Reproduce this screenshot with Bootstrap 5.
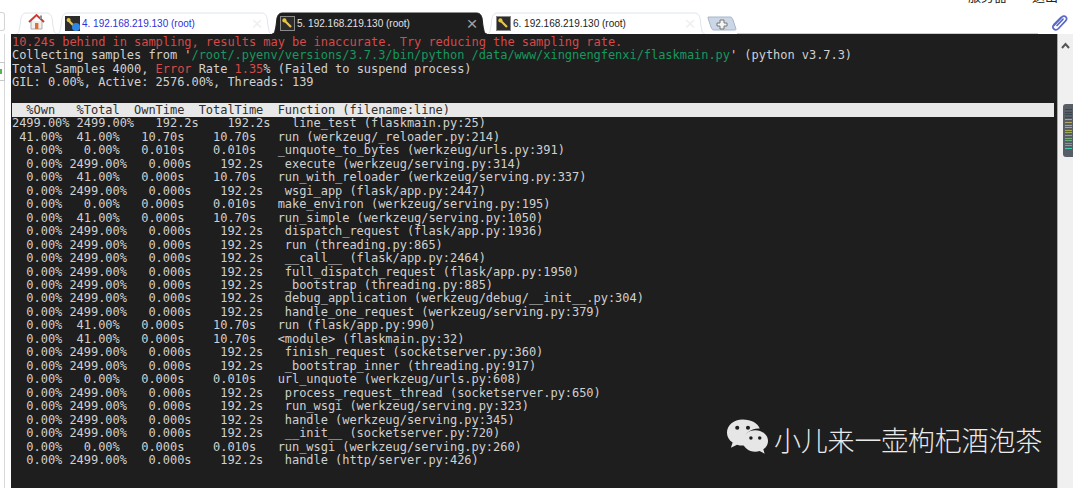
<!DOCTYPE html>
<html lang="zh">
<head>
<meta charset="utf-8">
<title>py-spy terminal</title>
<link href="https://cdn.jsdelivr.net/npm/bootstrap@5.3.0/dist/css/bootstrap.min.css" rel="stylesheet">
<style>
html,body{width:1080px;height:488px;overflow:hidden;background:#fff;margin:0}
.shell{width:1080px;height:488px}
.topstrip{height:34px;flex:none;overflow:hidden}
.addr-end{width:5px;height:19px;margin-top:12px;border:1px solid #d4d4d4;border-left:0;border-radius:0 3px 3px 0;flex:none}
.tabs{margin-left:11px;margin-top:12px;height:22px}
.tab-item{position:relative;height:22px;flex:none;font:10px/22px "Liberation Sans",sans-serif;padding-top:1px}
.tab-shape{position:absolute;inset:0;width:100%;height:100%}
.tab-body{position:relative;height:21px}
.t-home{width:41px}
.t-a{width:215px}
.t-b{width:218px}
.txt-blue{color:#3030d8}
.txt-light{color:#e2e2e2}
.txt-dark{color:#1c1c1c}
.tab-x{margin-left:auto;font-size:19px;line-height:19px;width:30px;text-align:center;font-weight:300}
.x-faint{color:#efefef}
.x-grey{color:#a0a0a0}
.tab-ico{width:15px;height:15px;margin-left:8px;margin-right:2px;flex:none;display:block}
.t-b .tab-ico{margin-left:9px}
.plus-tab{width:30px;height:15px;margin:4px 0 0 2px;flex:none;display:block}
.tail{width:343px;flex:none;margin-top:-3px;background:linear-gradient(#c5d0dc,#c5d0dc) 0 100%/301px 1px no-repeat;height:37px}
.cut-text{font:13px/14px "Noto Sans CJK SC",sans-serif;color:#222;margin-top:0;height:14px;transform:translateY(-8px);padding-left:231px;word-spacing:22px;white-space:pre}
.clip-ico{display:block;margin:3px 12px 0 auto}
.midrow{flex:1;min-height:0}
.gutter{width:11px;flex:none}
.gut-line{width:5px;border-right:1px solid #d8d8d8;padding-top:28px}
.gut-box{height:19px;width:5px;border:1px solid #c8c8c8;border-left:0;position:relative}
.gut-box i{display:block;width:2px;height:5px;background:#53b653;margin-top:6px}
.term{width:1046px;flex:none;background:#1e1e1e;position:relative;overflow:hidden}
.term-text{margin:0;padding:2px 0 0 1px;font:12px/13.47px "DejaVu Sans Mono","Liberation Mono",monospace;letter-spacing:-.045px;color:#d0d0d0;white-space:pre;overflow:hidden}
.head-line{display:block;background:#e8e8e8;color:#2e2e2e;margin-right:3px;height:14px;line-height:15px}
.c-red{color:#d44a48}
.c-green{color:#14995f}
.marker{position:absolute;left:715px;top:384px;color:#e9e9e9}
.mark-txt{font:27px/36px "Noto Sans CJK SC",sans-serif;font-weight:300;white-space:nowrap;color:#eaeaea;letter-spacing:-.2px;padding-top:4px}
.scroller{width:16px;flex:none;background:#f0f0f0;border-left:1px solid #a9a9a9;position:relative}
.thumb{position:absolute;left:5px;top:70px;width:10px;height:53px;background:#575e66;border-radius:3px 0 0 3px;padding:5px 1px 0 2px}
.thumb i{display:block;height:40px;background:repeating-linear-gradient(#0000 0 1px,#575e66 1px 2.6px),linear-gradient(#3d4650 0 22%,#b7a75a 24% 45%,#9fae55 60%,#55ab8d 85%,#45d0b0)}
.arrow-up{display:block;margin:8px auto 0}
.rightpad{flex:1;background:#fff}
.we-ico{width:43px;height:40px;flex:none;margin-right:-3px}
</style>
</head>
<body>
<div class="shell d-flex flex-column">
  <div class="topstrip d-flex">
    <div class="addr-end"></div>
    <div class="tabs d-flex">
      <div class="tab-item t-home">
        <svg class="tab-shape" viewBox="0 0 41 22" preserveAspectRatio="none"><path d="M0 22C3 22 3 18 4 14L5 6C6 2 8 1 11 1H30C33 1 35 2 36 6L37 14C38 18 38 22 41 22" fill="#fff" stroke="#dfe5ec"/></svg>
        <div class="tab-body d-flex justify-content-center">
          <svg width="17" height="17" viewBox="0 0 17 17"><path d="M3 8v8h11V8" fill="#f4f1ec" stroke="#a8b0b8"/><rect x="7" y="10" width="3.4" height="6" fill="#e0703a"/><path d="M1 9L8.5 2L16 9" fill="none" stroke="#d0392f" stroke-width="2"/><rect x="12" y="2.5" width="2" height="3.5" fill="#8f8f8f"/></svg>
        </div>
      </div>
      <div class="tab-item t-a">
        <svg class="tab-shape" viewBox="0 0 215 22" preserveAspectRatio="none"><path d="M0 22C3 22 3 18 4 14L5 6C6 2 8 1 11 1H204C207 1 209 2 210 6L211 14C212 18 212 22 215 22" fill="#fff" stroke="#dfe5ec"/></svg>
        <div class="tab-body d-flex align-items-center">
          <svg class="tab-ico" viewBox="0 0 15 15"><rect width="15" height="15" fill="#2c2c2c"/><path d="M3 4L9 10" stroke="#e8c53a" stroke-width="2.2"/><circle cx="3.6" cy="4" r="2" fill="#e8c53a"/><circle cx="11" cy="11" r="4" fill="#2f86e6"/></svg>
          <span class="txt-blue">4. 192.168.219.130 (root)</span>
          <span class="tab-x x-faint">×</span>
        </div>
      </div>
      <div class="tab-item t-a">
        <svg class="tab-shape" viewBox="0 0 215 22" preserveAspectRatio="none"><path d="M0 22C3 22 3 18 4 14L5 6C6 2 8 1 11 1H204C207 1 209 2 210 6L211 14C212 18 212 22 215 22" fill="#1e1e1e" stroke="#1e1e1e"/></svg>
        <div class="tab-body d-flex align-items-center">
          <svg class="tab-ico" viewBox="0 0 15 15"><rect x=".5" y=".5" width="14" height="14" fill="#2c2c2c" stroke="#8a8a8a"/><path d="M4 4L11 11" stroke="#e8c53a" stroke-width="2.2"/><circle cx="4.4" cy="4.4" r="2.1" fill="#e8c53a"/></svg>
          <span class="txt-light">5. 192.168.219.130 (root)</span>
          <span class="tab-x x-grey">×</span>
        </div>
      </div>
      <div class="tab-item t-b">
        <svg class="tab-shape" viewBox="0 0 218 22" preserveAspectRatio="none"><path d="M0 22C3 22 3 18 4 14L5 6C6 2 8 1 11 1H207C210 1 212 2 213 6L214 14C215 18 215 22 218 22" fill="#fff" stroke="#dfe5ec"/></svg>
        <div class="tab-body d-flex align-items-center">
          <svg class="tab-ico" viewBox="0 0 15 15"><rect x=".5" y=".5" width="14" height="14" fill="#2c2c2c" stroke="#8a8a8a"/><path d="M4 4L11 11" stroke="#e8c53a" stroke-width="2.2"/><circle cx="4.4" cy="4.4" r="2.1" fill="#e8c53a"/></svg>
          <span class="txt-dark">6. 192.168.219.130 (root)</span>
          <span class="tab-x x-faint">×</span>
        </div>
      </div>
      <svg class="plus-tab" viewBox="0 0 30 15"><path d="M1 1H23C25 1 25 2 26 4L29 13C29 14 28 14 27 14H7C5 14 5 13 4 11L1 2Z" fill="#cbd7e6" stroke="#a9b6c6"/><path d="M13 4h4v3h3v3h-3v3h-4v-3h-3V7h3z" fill="#f4f4f4" stroke="#777"/></svg>
    </div>
    <div class="tail ms-auto">
      <div class="cut-text">服务器 退出</div>
      <svg class="clip-ico" width="17" height="17" viewBox="0 0 17 17"><path d="M3 11.5L10.8 3.2c1.2-1.3 3-1.3 4-.3s1 2.600-.2 3.900L7.500 14.500c-1.500 1.500-3.400 1.600-4.600.500s-1.200-3.100.200-4.700L9.800 3.500M6 11.500l6-6.400" fill="none" stroke="#5a68c8" stroke-width="1.700" stroke-linecap="round"/></svg>
    </div>
  </div>
  <div class="midrow d-flex">
    <div class="gutter"><div class="gut-line h-100"><div class="gut-box"><i></i></div></div></div>
    <div class="term">
<pre class="term-text"><span class="c-red">10.24s behind in sampling, results may be inaccurate. Try reducing the sampling rate.</span>
Collecting samples from '<span class="c-green">/root/.pyenv/versions/3.7.3/bin/python /data/www/xingnengfenxi/flaskmain.py</span>' (python v3.7.3)
Total Samples 4000, <span class="c-red">Error</span> Rate <span class="c-red">1.35</span>% (Failed to suspend process)
GIL: 0.00%, Active: 2576.00%, Threads: 139

<span class="head-line">  %Own   %Total  OwnTime  TotalTime  Function (filename:line)</span>2499.00% 2499.00%   192.2s    192.2s   line_test (flaskmain.py:25)
 41.00%  41.00%   10.70s    10.70s   run (werkzeug/_reloader.py:214)
  0.00%   0.00%   0.010s    0.010s   _unquote_to_bytes (werkzeug/urls.py:391)
  0.00% 2499.00%   0.000s    192.2s   execute (werkzeug/serving.py:314)
  0.00%  41.00%   0.000s    10.70s   run_with_reloader (werkzeug/serving.py:337)
  0.00% 2499.00%   0.000s    192.2s   wsgi_app (flask/app.py:2447)
  0.00%   0.00%   0.000s    0.010s   make_environ (werkzeug/serving.py:195)
  0.00%  41.00%   0.000s    10.70s   run_simple (werkzeug/serving.py:1050)
  0.00% 2499.00%   0.000s    192.2s   dispatch_request (flask/app.py:1936)
  0.00% 2499.00%   0.000s    192.2s   run (threading.py:865)
  0.00% 2499.00%   0.000s    192.2s   __call__ (flask/app.py:2464)
  0.00% 2499.00%   0.000s    192.2s   full_dispatch_request (flask/app.py:1950)
  0.00% 2499.00%   0.000s    192.2s   _bootstrap (threading.py:885)
  0.00% 2499.00%   0.000s    192.2s   debug_application (werkzeug/debug/__init__.py:304)
  0.00% 2499.00%   0.000s    192.2s   handle_one_request (werkzeug/serving.py:379)
  0.00%  41.00%   0.000s    10.70s   run (flask/app.py:990)
  0.00%  41.00%   0.000s    10.70s   &lt;module&gt; (flaskmain.py:32)
  0.00% 2499.00%   0.000s    192.2s   finish_request (socketserver.py:360)
  0.00% 2499.00%   0.000s    192.2s   _bootstrap_inner (threading.py:917)
  0.00%   0.00%   0.000s    0.010s   url_unquote (werkzeug/urls.py:608)
  0.00% 2499.00%   0.000s    192.2s   process_request_thread (socketserver.py:650)
  0.00% 2499.00%   0.000s    192.2s   run_wsgi (werkzeug/serving.py:323)
  0.00% 2499.00%   0.000s    192.2s   handle (werkzeug/serving.py:345)
  0.00% 2499.00%   0.000s    192.2s   __init__ (socketserver.py:720)
  0.00%   0.00%   0.000s    0.010s   run_wsgi (werkzeug/serving.py:260)
  0.00% 2499.00%   0.000s    192.2s   handle (http/server.py:426)</pre>
      <div class="marker d-flex align-items-center gap-2">
        <svg class="we-ico" viewBox="0 0 44 40"><path d="M17 1C8 1 1 7 1 14.500c0 4.200 2.200 7.700 5.800 10.200L5 30l6.300-3.200c1.900.6 3.700.9 5.700.9 1 0 1.400 0 2-.1-.5-1.400-.8-2.800-.8-4.300 0-7.300 6.700-13 15-13 .5 0 1 0 1.300.1C33 5 25.800 1 17 1z" fill="#e6e6e6"/><path d="M43 23c0-6-6-11-13-11s-13 5-13 11 6 11 13 11c1.500 0 3-.3 4.400-.7L39.500 36l-1.300-4.500C41.200 29.500 43 26.500 43 23z" fill="#e6e6e6"/><circle cx="11.500" cy="9.500" r="2.100" fill="#1e1e1e"/><circle cx="22.500" cy="9.500" r="2.100" fill="#1e1e1e"/><circle cx="25.500" cy="20" r="1.800" fill="#1e1e1e"/><circle cx="34.500" cy="20" r="1.800" fill="#1e1e1e"/></svg>
        <span class="mark-txt">小儿来一壶枸杞酒泡茶</span>
      </div>
    </div>
    <div class="scroller">
      <svg class="arrow-up" width="9" height="7" viewBox="0 0 9 7"><path d="M1 6L4.500 2L8 6" fill="none" stroke="#555" stroke-width="2"/></svg>
      <div class="thumb"><i></i></div>
    </div>
    <div class="rightpad"></div>
  </div>
</div>
<script src="https://cdn.jsdelivr.net/npm/bootstrap@5.3.0/dist/js/bootstrap.bundle.min.js"></script>
</body>
</html>
